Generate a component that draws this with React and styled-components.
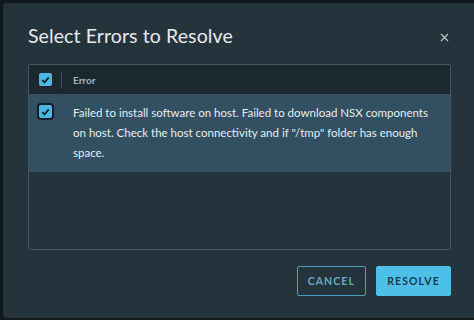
import React from "react";
import styled, { createGlobalStyle } from "styled-components";

const GlobalStyle = createGlobalStyle`
  html, body {
    margin: 0;
    padding: 0;
    background: #11191d;
    font-family: "Lato", "Liberation Sans", sans-serif;
  }
  * { box-sizing: border-box; }
`;

function Check({ focused }) {
  return (
    <CheckBox focused={focused}>
      <svg width="9" height="8" viewBox="0 0 9 8">
        <path d="M1.2 4.2 L3.5 6.4 L7.8 1.4" fill="none" stroke="#14232b" strokeWidth="1.8" />
      </svg>
    </CheckBox>
  );
}

export default function App() {
  return (
    <>
      <GlobalStyle />
      <Modal>
        <Header>
          <Title>Select Errors to Resolve</Title>
          <Close>
            <svg width="9" height="9" viewBox="0 0 9 9">
              <path d="M1 1 L8 8 M8 1 L1 8" stroke="#b9c4ca" strokeWidth="1.2" />
            </svg>
          </Close>
        </Header>
        <Grid>
          <HeadRow>
            <CheckCell>
              <Check />
            </CheckCell>
            <HeadLabel>Error</HeadLabel>
          </HeadRow>
          <Row>
            <CheckCell>
              <Check focused />
            </CheckCell>
            <RowText>
              Failed to install software on host. Failed to download NSX components
              on host. Check the host connectivity and if "/tmp" folder has enough
              space.
            </RowText>
          </Row>
        </Grid>
        <Footer>
          <Button>CANCEL</Button>
          <Button primary>RESOLVE</Button>
        </Footer>
      </Modal>
    </>
  );
}

const Modal = styled.div`
  margin: 3px 0 0 3px;
  width: 471px;
  height: 315px;
  background: #25343c;
  border-radius: 4px 0 0 4px;
  padding: 0 23px 0 25px;
  display: flex;
  flex-direction: column;
`;

const Header = styled.div`
  display: flex;
  align-items: center;
  justify-content: space-between;
  height: 61px;
  padding-top: 3px;
`;

const Title = styled.h1`
  margin: 0;
  font-size: 19.5px;
  font-weight: 400;
  color: #e6eaec;
  letter-spacing: 0.1px;
`;

const Close = styled.div`
  display: flex;
  margin-right: 2px;
  margin-top: 4px;
`;

const Grid = styled.div`
  height: 186px;
  border: 1px solid #46555d;
  border-radius: 2px;
  display: flex;
  flex-direction: column;
`;

const HeadRow = styled.div`
  display: flex;
  align-items: center;
  height: 30px;
  background: #1c2830;
  border-bottom: 1px solid #3d4c55;
`;

const CheckCell = styled.div`
  width: 32px;
  flex-shrink: 0;
  display: flex;
  justify-content: center;
  padding-left: 1px;
`;

const CheckBox = styled.div`
  width: ${(p) => (p.focused ? "17px" : "13px")};
  height: ${(p) => (p.focused ? "17px" : "13px")};
  border-radius: ${(p) => (p.focused ? "4px" : "2px")};
  background: #49b9e2;
  border: ${(p) => (p.focused ? "2px solid #13202a" : "none")};
  display: flex;
  align-items: center;
  justify-content: center;
`;

const HeadLabel = styled.div`
  border-left: 1px solid #3d4c55;
  height: 18px;
  display: flex;
  align-items: center;
  padding-left: 11px;
  font-size: 10px;
  font-weight: 700;
  color: #a6b2b9;
`;

const Row = styled.div`
  display: flex;
  align-items: flex-start;
  background: #325062;
  padding: 8px 0 9px 0;
  min-height: 77px;
`;

const RowText = styled.div`
  margin-left: 12px;
  max-width: 370px;
  font-size: 11.5px;
  line-height: 20px;
  color: #e7edf1;
`;

const Footer = styled.div`
  display: flex;
  justify-content: flex-end;
  gap: 10px;
  margin-top: 16px;
`;

const Button = styled.button`
  height: 30px;
  padding: 0 10px;
  min-width: ${(p) => (p.primary ? "75px" : "68px")};
  border-radius: 2px;
  border: 1px solid ${(p) => (p.primary ? "#4cc0e8" : "#4a9ec0")};
  background: ${(p) => (p.primary ? "#4cc0e8" : "transparent")};
  color: ${(p) => (p.primary ? "#1b3a4c" : "#6aa9c4")};
  font-family: "Lato", "Liberation Sans", sans-serif;
  font-size: 10.5px;
  font-weight: 700;
  letter-spacing: 1.1px;
`;
